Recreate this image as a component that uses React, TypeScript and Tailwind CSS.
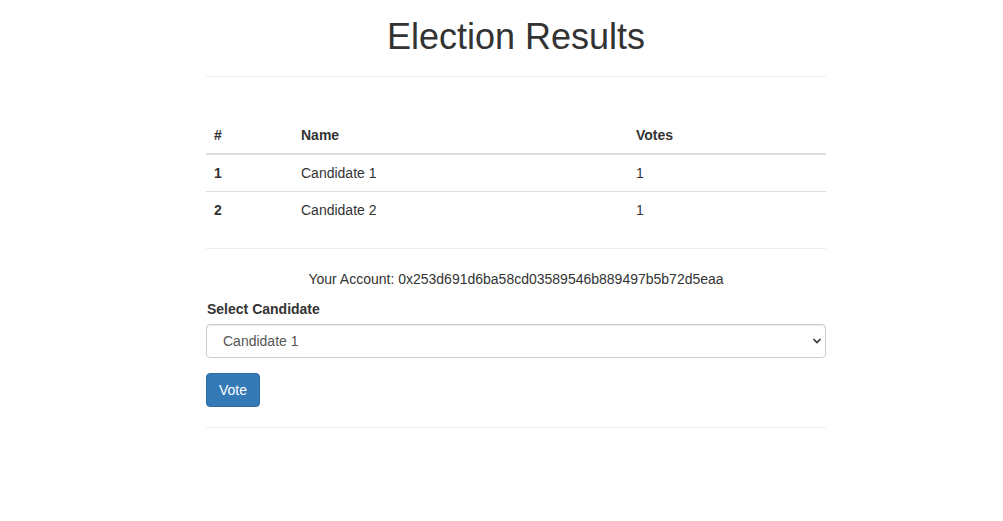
export default function App() {
  const candidates = [
    { id: 1, name: "Candidate 1", votes: 1 },
    { id: 2, name: "Candidate 2", votes: 1 },
  ];

  return (
    <div className="min-h-[521px] bg-white text-[#333] text-[14px] leading-[20px] font-['Liberation_Sans',Arial,sans-serif]">
      <div className="w-[620px] ml-[206px]">
        <h1 className="mt-[17px] text-center text-[36px] leading-[40px] font-normal">Election Results</h1>
        <hr className="mt-[19px] border-t border-[#eee]" />

        <table className="mt-[40px] w-full border-collapse">
          <thead>
            <tr className="border-b-2 border-[#ddd]">
              <th className="w-[87px] p-[8px] text-left font-bold">#</th>
              <th className="w-[335px] p-[8px] text-left font-bold">Name</th>
              <th className="p-[8px] text-left font-bold">Votes</th>
            </tr>
          </thead>
          <tbody>
            {candidates.map((c, i) => (
              <tr key={c.id} className={i > 0 ? "border-t border-[#ddd]" : ""}>
                <th className="p-[8px] text-left font-bold">{c.id}</th>
                <td className="p-[8px]">{c.name}</td>
                <td className="p-[8px]">{c.votes}</td>
              </tr>
            ))}
          </tbody>
        </table>

        <hr className="mt-[20px] border-t border-[#eee]" />

        <p className="mt-[20px] text-center">Your Account: 0x253d691d6ba58cd03589546b889497b5b72d5eaa</p>

        <form className="mt-[10px]">
          <div>
            <label className="block mb-[5px] ml-[1px] font-bold">Select Candidate</label>
            <div className="relative">
              <select className="block w-full h-[34px] appearance-none rounded-[4px] border border-[#ccc] bg-white pl-[16px] pr-[30px] text-[14px] text-[#555] shadow-[inset_0_1px_1px_rgba(0,0,0,0.075)]">
                {candidates.map((c) => (
                  <option key={c.id} value={c.id}>{c.name}</option>
                ))}
              </select>
              <svg className="pointer-events-none absolute right-[4px] top-[13px]" width="10" height="8" viewBox="0 0 10 8">
                <path d="M1.5 2 L5 5.5 L8.5 2" fill="none" stroke="#333" strokeWidth="1.6" />
              </svg>
            </div>
          </div>
          <button type="button" className="mt-[15px] h-[34px] rounded-[4px] border border-[#2e6da4] bg-[#337ab7] px-[12px] text-white">
            Vote
          </button>
        </form>

        <hr className="mt-[20px] border-t border-[#eee]" />
      </div>
    </div>
  );
}
